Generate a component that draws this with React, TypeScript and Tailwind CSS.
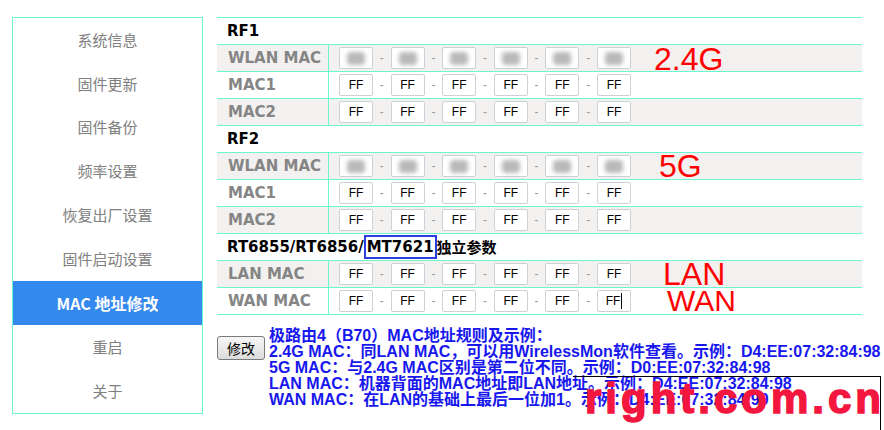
import React from "react";

const LINE = "border-[#6af7cd]";

function Box({ val, blur, cursor }: { val?: string; blur?: boolean; cursor?: boolean }) {
  return (
    <div className="w-[34px] h-[22px] border border-[#cfd0d6] rounded-[2px] bg-white flex items-center justify-center text-[12px] text-black font-['Liberation_Sans',sans-serif] shrink-0">
      {blur ? (
        <div className="w-[18px] h-[13px] rounded-[4px] bg-[#b9b9b9] blur-[2px]" />
      ) : (
        <span className="flex items-center">
          {val}
          {cursor && <span className="inline-block w-[1px] h-[16px] bg-black ml-[1px]" />}
        </span>
      )}
    </div>
  );
}

function Row({ label, gray, blur, cursorLast }: { label: string; gray?: boolean; blur?: boolean; cursorLast?: boolean }) {
  return (
    <div className={`flex h-[27px] border-b ${LINE} ${gray ? "bg-[#f2f1ef]" : "bg-white"}`}>
      <div className={`w-[112px] border-r ${LINE} pl-[11px] flex items-center text-[15px] font-bold text-[#858585] font-['DejaVu_Sans',sans-serif] whitespace-nowrap`}>
        {label}
      </div>
      <div className="flex items-center pl-[10px]">
        {[0, 1, 2, 3, 4, 5].map((i) => (
          <React.Fragment key={i}>
            {i > 0 && (
              <span className="w-[17.6px] text-center text-[12px] text-[#9a9a9a] font-['Liberation_Sans',sans-serif]">-</span>
            )}
            <Box val="FF" blur={blur} cursor={cursorLast && i === 5} />
          </React.Fragment>
        ))}
      </div>
    </div>
  );
}

function Header({ children }: { children: React.ReactNode }) {
  return (
    <div className={`h-[27px] border-b ${LINE} pl-[10px] flex items-center text-[15px] font-bold text-black font-['DejaVu_Sans','Noto_Sans_CJK_SC',sans-serif] whitespace-nowrap`}>
      {children}
    </div>
  );
}

const menu = ["系统信息", "固件更新", "固件备份", "频率设置", "恢复出厂设置", "固件启动设置", "MAC 地址修改", "重启", "关于"];

export default function App() {
  return (
    <div className="relative w-[884px] h-[430px] bg-white overflow-hidden flex items-start pl-[12px] pt-[17px] gap-[14px]">
      <div className={`w-[191px] h-[397px] border ${LINE} flex flex-col shrink-0`}>
        {menu.map((m, i) =>
          i === 6 ? (
            <div key={m} className="h-[44px] flex items-center justify-center bg-[#3489ee] text-white text-[16px] font-bold font-['Noto_Sans_CJK_SC',sans-serif]">
              {m}
            </div>
          ) : (
            <div key={m} className="h-[44px] flex items-center justify-center text-[#808080] text-[15px] font-['Noto_Sans_CJK_SC',sans-serif]">
              {m}
            </div>
          )
        )}
      </div>

      <div className="flex flex-col w-[645px] shrink-0">
        <div className={`border-t ${LINE}`}>
          <Header>RF1</Header>
          <Row label="WLAN MAC" gray blur />
          <Row label="MAC1" />
          <Row label="MAC2" gray />
          <Header>RF2</Header>
          <Row label="WLAN MAC" gray blur />
          <Row label="MAC1" />
          <Row label="MAC2" gray />
          <Header>
            RT6855/RT6856/
            <span className="border-2 border-[#2b3de0] px-[1px] leading-[20px]">MT7621</span>
            <span className="font-['Noto_Sans_CJK_SC',sans-serif]">独立参数</span>
          </Header>
          <Row label="LAN MAC" gray />
          <Row label="WAN MAC" cursorLast />
        </div>

        <div className="flex items-start mt-[13px] gap-[4px]">
          <button className="mt-[8px] w-[48px] h-[24px] shrink-0 border border-[#7a7a7a] rounded-[3px] bg-gradient-to-b from-[#f6f6f6] to-[#dcdcdc] text-[14px] text-black font-['Noto_Sans_CJK_SC',sans-serif] flex items-center justify-center">
            修改
          </button>
          <div className="text-[16px] leading-[16px] font-bold text-[#1717ee] font-['Liberation_Sans','Noto_Sans_CJK_SC',sans-serif] whitespace-nowrap">
            <div>极路由4（B70）MAC地址规则及示例：</div>
            <div>2.4G MAC：同LAN MAC，可以用WirelessMon软件查看。示例：D4:EE:07:32:84:98</div>
            <div>5G MAC：与2.4G MAC区别是第二位不同。示例：D0:EE:07:32:84:98</div>
            <div>LAN MAC：机器背面的MAC地址即LAN地址。示例：D4:EE:07:32:84:98</div>
            <div>WAN MAC：在LAN的基础上最后一位加1。示例：D4:EE:07:32:84:99</div>
          </div>
        </div>
      </div>

      <span className="absolute left-[654px] top-[43px] text-[32px] leading-none text-[#ff0000] font-['Liberation_Sans',sans-serif]">2.4G</span>
      <span className="absolute left-[659px] top-[150px] text-[32px] leading-none text-[#ff0000] font-['Liberation_Sans',sans-serif]">5G</span>
      <span className="absolute left-[663px] top-[258px] text-[32px] leading-none text-[#ff0000] font-['Liberation_Sans',sans-serif]">LAN</span>
      <span className="absolute left-[667px] top-[286px] text-[30px] leading-none text-[#ff0000] font-['Liberation_Sans',sans-serif]">WAN</span>

      <div className="absolute left-[573px] top-[376px] w-[308px] h-[60px] border-t border-r border-black" />
      <span className="absolute left-[585px] top-[378px] text-[42px] leading-none font-bold tracking-[4px] text-[#f3163e] [-webkit-text-stroke:1.5px_#f3163e] font-['Liberation_Sans',sans-serif]">
        right.com.cn
      </span>
    </div>
  );
}
